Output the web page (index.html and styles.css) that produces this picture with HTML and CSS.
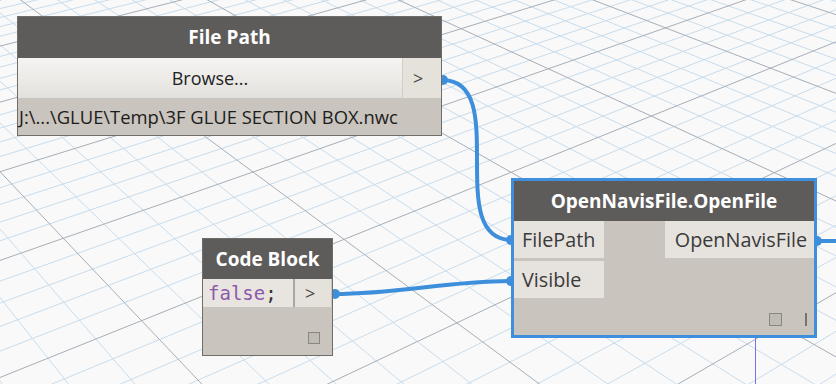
FILE: index.html
```html
<!DOCTYPE html>
<html>
<head>
    <meta charset="UTF-8">
    <meta name="viewport" content="width=device-width, initial-scale=1.0">
    <title>Dynamo Graph - OpenNavisFile</title>
    <link rel="stylesheet" href="styles.css">
</head>
<body>
    <div class="canvas">
        <svg class="grid" id="grid" width="836" height="384"></svg>
        <div class="axis"></div>

        <svg class="wires" width="836" height="384">
            <path d="M442,80 C512,80 442,240 512,240"/>
            <path d="M334,294 C400,294 446,281 512,281"/>
            <path d="M816,241 L836,241"/>
            <circle cx="443" cy="80" r="5"/>
            <circle cx="335" cy="294" r="5"/>
            <circle cx="511" cy="240" r="5"/>
            <circle cx="511" cy="281" r="5"/>
            <circle cx="817" cy="241" r="5"/>
        </svg>

        <div class="node file-path">
            <div class="node-title">File Path</div>
            <div class="browse-row">
                <div class="browse">Browse...</div>
                <div class="out-arrow">&gt;</div>
            </div>
            <div class="path-value">J:\...\GLUE\Temp\3F GLUE SECTION BOX.nwc</div>
        </div>

        <div class="node code-block">
            <div class="node-title">Code Block</div>
            <div class="code-row">
                <div class="code"><span class="kw">false</span>;</div>
                <div class="out-arrow">&gt;</div>
            </div>
            <div class="node-foot">
                <div class="preview-box"></div>
            </div>
        </div>

        <div class="node open-file">
            <div class="node-title">OpenNavisFile.OpenFile</div>
            <div class="ports">
                <div class="inputs">
                    <div class="port in">FilePath</div>
                    <div class="port in">Visible</div>
                </div>
                <div class="outputs">
                    <div class="port out">OpenNavisFile</div>
                </div>
            </div>
            <div class="node-foot">
                <div class="preview-box big"></div>
                <div class="lacing"></div>
            </div>
        </div>
    </div>

    <script src="grid.js"></script>
</body>
</html>
```

FILE: styles.css
```css
body {
    margin: 0;
    background-color: #f9f9f9;
    font-family: "Open Sans", "Liberation Sans", sans-serif;
    overflow: hidden;
}
.canvas {
    position: relative;
    width: 836px;
    height: 384px;
    overflow: hidden;
}
.grid, .wires {
    position: absolute;
    left: 0;
    top: 0;
}
.grid line {
    stroke-width: 1;
}
.grid .minor {
    stroke: #c8dcec;
}
.grid .major {
    stroke: #a7aeb7;
}
.axis {
    position: absolute;
    left: 755px;
    top: 320px;
    width: 1px;
    height: 64px;
    background-color: #7a72e2;
}
.wires path {
    fill: none;
    stroke: #3d8fdc;
    stroke-width: 4;
}
.wires circle {
    fill: #3d8fdc;
}

/* nodes */
.node {
    position: absolute;
    display: flex;
    flex-direction: column;
    background-color: #c9c4bd;
    border: 1px solid #6f6d6a;
    color: #333;
}
.node-title {
    height: 40px;
    line-height: 40px;
    background-color: #5e5c5a;
    color: white;
    font-weight: bold;
    font-size: 19px;
    text-align: center;
    white-space: nowrap;
}
.out-arrow {
    width: 28px;
    padding-left: 10px;
    background-color: #e5e2dc;
    font-size: 18px;
    color: #444;
}
.node-foot {
    display: flex;
    justify-content: flex-end;
    align-items: center;
    margin-top: auto;
}
.preview-box {
    width: 10px;
    height: 10px;
    border: 1px solid #8a8680;
    background-color: #c0bbb4;
}

/* File Path */
.file-path {
    left: 17px;
    top: 16px;
    width: 423px;
}
.file-path .node-title {
    height: 41px;
    line-height: 41px;
}
.browse-row {
    display: flex;
    height: 40px;
    line-height: 40px;
}
.browse {
    flex: 1;
    border-right: 1px solid #d2cdc6;
    background: linear-gradient(#f5f4f2, #e3e1dd);
    text-align: center;
    font-size: 18px;
    color: #222;
}
.path-value {
    height: 37px;
    line-height: 37px;
    padding-left: 1px;
    font-size: 18.4px;
    color: #1c1c1c;
    white-space: nowrap;
}

/* Code Block */
.code-block {
    left: 202px;
    top: 238px;
    width: 129px;
    height: 116px;
}
.code-row {
    display: flex;
    height: 28px;
    line-height: 28px;
}
.code {
    width: 85px;
    padding-left: 5px;
    border-right: 2px solid #aca79f;
    background-color: #e8e5e0;
    font-family: "DejaVu Sans Mono", "Liberation Mono", monospace;
    font-size: 19px;
    color: #333;
}
.code .kw {
    color: #8d59a9;
}
.code-block .out-arrow {
    width: 26px;
}
.code-block .node-foot {
    padding: 0 12px 11px 0;
}

/* OpenNavisFile.OpenFile */
.open-file {
    left: 511px;
    top: 178px;
    width: 300px;
    height: 154px;
    border: 3px solid #3f8fdc;
}
.ports {
    display: flex;
    justify-content: space-between;
}
.inputs {
    display: flex;
    flex-direction: column;
    gap: 3px;
    width: 90px;
}
.outputs {
    width: 149px;
}
.port {
    height: 37px;
    line-height: 37px;
    background-color: #e6e3de;
    font-size: 19.8px;
    color: #3a3a3a;
}
.port.in {
    padding-left: 8px;
}
.port.out {
    padding-right: 7px;
    text-align: right;
}
.open-file .node-foot {
    gap: 23px;
    padding: 0 7px 9px 0;
}
.preview-box.big {
    width: 11px;
    height: 11px;
}
.lacing {
    width: 2px;
    height: 13px;
    background-color: #77736e;
}
```

FILE: grid.js
```js
// ground plane grid seen in perspective, behind the graph
// (u, v) are grid cells on the plane, every 5th line is a major one
var A = 38.654, B = 11.45, D = -9.04, E = 8.764, F = 171.7, G = 0.01716, K = -0.01912;

function project(u, v) {
    var w = 1 + G * u + K * v;
    return [(A * u + B * v) / w, (D * u + E * v + F) / w];
}

var svg = document.getElementById("grid");
var ns = "http://www.w3.org/2000/svg";
var vpU = [B / K, E / K];   // lines u = const meet here
var vpV = [A / G, D / G];   // lines v = const meet here
var majors = [];

function addLine(vp, p, major) {
    var dx = p[0] - vp[0], dy = p[1] - vp[1];
    var len = Math.sqrt(dx * dx + dy * dy);
    var line = document.createElementNS(ns, "line");
    line.setAttribute("x1", vp[0]);
    line.setAttribute("y1", vp[1]);
    line.setAttribute("x2", vp[0] + dx / len * 6000);
    line.setAttribute("y2", vp[1] + dy / len * 6000);
    line.setAttribute("class", major ? "major" : "minor");
    if (major) {
        majors.push(line);
    } else {
        svg.appendChild(line);
    }
}

for (var k = -300; k <= 600; k++) {
    // a point on u = k where w = 1
    addLine(vpU, project(k, -G * k / K), k % 5 == 0);
}
for (var k = -600; k <= 300; k++) {
    // a point on v = k where w = 1
    addLine(vpV, project(-K * k / G, k), k % 5 == 0);
}
majors.forEach(function (line) {
    svg.appendChild(line);
});
```
